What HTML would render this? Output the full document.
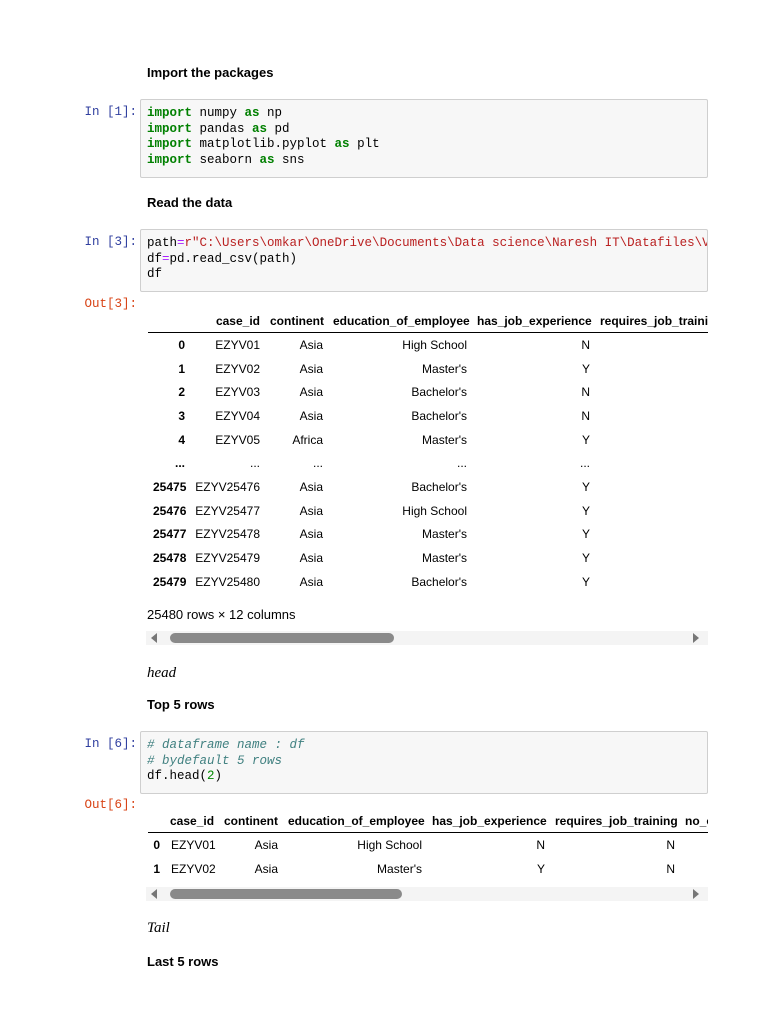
<!DOCTYPE html>
<html><head><meta charset="utf-8"><style>
body{margin:0;width:768px;height:1024px;background:#fff;position:relative;overflow:hidden;font-family:"Liberation Sans",sans-serif;color:#000}
.a{position:absolute;white-space:nowrap}
.h{font-weight:bold;font-size:13px}
.p{font-family:"Liberation Mono",monospace;font-size:12.5px;text-align:right;width:70px;left:67px}
.in{color:#303f9f}.out{color:#d84315}
.box{position:absolute;left:140px;width:566px;border:1px solid #cfcfcf;border-radius:2px;background:#f7f7f7;overflow:hidden}
.code{font-family:"Liberation Mono",monospace;font-size:12.5px;line-height:15.5px;padding:6px 6px 4px;white-space:pre;color:#000}
.k{color:#008000;font-weight:bold}.s{color:#ba2121}.o{color:#aa22ff}.c{color:#408080;font-style:italic}.n{color:#080}
.tw{position:absolute;left:148px;width:560px;overflow:hidden}
table{border-collapse:collapse;table-layout:fixed;font-size:12px}
td,th{text-align:right;padding:0 5px;height:23.7px;white-space:nowrap;overflow:hidden}
th{font-weight:bold}
thead th{height:22px;border-bottom:1.5px solid #000;vertical-align:middle;overflow:visible}
.sb{position:absolute;left:146px;width:562px;height:14px;background:#f4f4f4}
.th{position:absolute;top:2px;height:10px;border-radius:5px;background:#8a8a8a;left:24px}
.l{position:absolute;left:5px;top:2px;width:0;height:0;border-top:5px solid transparent;border-bottom:5px solid transparent;border-right:6px solid #777}
.r{position:absolute;right:9px;top:2px;width:0;height:0;border-top:5px solid transparent;border-bottom:5px solid transparent;border-left:6px solid #777}
.m{font-family:"Liberation Serif",serif;font-style:italic;font-size:15px}
</style></head><body>
<div class="a h" style="left:147px;top:65px">Import the packages</div>
<div class="a p in" style="top:105px">In [1]:</div>
<div class="box" style="top:99px;height:77px"><div class="code"><span class="k">import</span> numpy <span class="k">as</span> np
<span class="k">import</span> pandas <span class="k">as</span> pd
<span class="k">import</span> matplotlib.pyplot <span class="k">as</span> plt
<span class="k">import</span> seaborn <span class="k">as</span> sns</div></div>
<div class="a h" style="left:147px;top:195px">Read the data</div>
<div class="a p in" style="top:235px">In [3]:</div>
<div class="box" style="top:229px;height:61px"><div class="code">path<span class="o">=</span><span class="s">r"C:\Users\omkar\OneDrive\Documents\Data science\Naresh IT\Datafiles\Visa</span>
df<span class="o">=</span>pd.read_csv(path)
df</div></div>
<div class="a p out" style="top:297px">Out[3]:</div>
<div class="tw" style="top:310px"><table style="width:587px">
<colgroup><col style="width:42px"><col style="width:75px"><col style="width:63px"><col style="width:144px"><col style="width:123px"><col style="width:140px"></colgroup>
<thead><tr><th></th><th>case_id</th><th>continent</th><th>education_of_employee</th><th>has_job_experience</th><th style="text-align:left">requires_job_training</th></tr></thead>
<tbody>
<tr><th>0</th><td>EZYV01</td><td>Asia</td><td>High School</td><td>N</td><td></td></tr>
<tr><th>1</th><td>EZYV02</td><td>Asia</td><td>Master's</td><td>Y</td><td></td></tr>
<tr><th>2</th><td>EZYV03</td><td>Asia</td><td>Bachelor's</td><td>N</td><td></td></tr>
<tr><th>3</th><td>EZYV04</td><td>Asia</td><td>Bachelor's</td><td>N</td><td></td></tr>
<tr><th>4</th><td>EZYV05</td><td>Africa</td><td>Master's</td><td>Y</td><td></td></tr>
<tr><th>...</th><td>...</td><td>...</td><td>...</td><td>...</td><td></td></tr>
<tr><th>25475</th><td>EZYV25476</td><td>Asia</td><td>Bachelor's</td><td>Y</td><td></td></tr>
<tr><th>25476</th><td>EZYV25477</td><td>Asia</td><td>High School</td><td>Y</td><td></td></tr>
<tr><th>25477</th><td>EZYV25478</td><td>Asia</td><td>Master's</td><td>Y</td><td></td></tr>
<tr><th>25478</th><td>EZYV25479</td><td>Asia</td><td>Master's</td><td>Y</td><td></td></tr>
<tr><th>25479</th><td>EZYV25480</td><td>Asia</td><td>Bachelor's</td><td>Y</td><td></td></tr>
</tbody></table></div>
<div class="a" style="left:147px;top:607px;font-size:13px">25480 rows × 12 columns</div>
<div class="sb" style="top:631px"><div class="l"></div><div class="th" style="width:224px"></div><div class="r"></div></div>
<div class="a m" style="left:147px;top:665px">head</div>
<div class="a h" style="left:147px;top:697px">Top 5 rows</div>
<div class="a p in" style="top:737px">In [6]:</div>
<div class="box" style="top:731px;height:61px"><div class="code"><span class="c"># dataframe name : df</span>
<span class="c"># bydefault 5 rows</span>
df.head(<span class="n">2</span>)</div></div>
<div class="a p out" style="top:798px">Out[6]:</div>
<div class="tw" style="top:810px"><table style="width:572px">
<colgroup><col style="width:17px"><col style="width:54px"><col style="width:64px"><col style="width:144px"><col style="width:123px"><col style="width:130px"><col style="width:40px"></colgroup>
<thead><tr><th></th><th>case_id</th><th>continent</th><th>education_of_employee</th><th>has_job_experience</th><th>requires_job_training</th><th style="text-align:left">no_of</th></tr></thead>
<tbody>
<tr><th>0</th><td style="text-align:left;padding-left:6px">EZYV01</td><td>Asia</td><td>High School</td><td>N</td><td>N</td><td></td></tr>
<tr><th>1</th><td style="text-align:left;padding-left:6px">EZYV02</td><td>Asia</td><td>Master's</td><td>Y</td><td>N</td><td></td></tr>
</tbody></table></div>
<div class="sb" style="top:887px"><div class="l"></div><div class="th" style="width:232px"></div><div class="r"></div></div>
<div class="a m" style="left:147px;top:920px">Tail</div>
<div class="a h" style="left:147px;top:954px">Last 5 rows</div>
</body></html>
